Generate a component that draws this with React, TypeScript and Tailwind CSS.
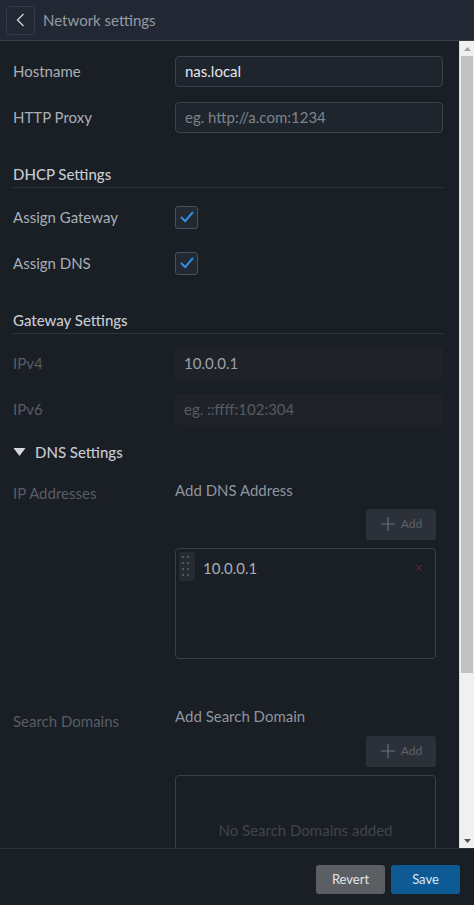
import React from "react";

const font = { fontFamily: "Lato, 'Open Sans', sans-serif" };

function Row({ label, children, dim }: { label: string; children: React.ReactNode; dim?: boolean }) {
  return (
    <div className="flex items-center h-[30px]">
      <div className={`w-[162px] text-[15px] ${dim ? "text-[#575d66]" : "text-[#a9afb7]"}`}>{label}</div>
      <div className="flex-1">{children}</div>
    </div>
  );
}

function Input({ value, placeholder }: { value?: string; placeholder?: string }) {
  return (
    <div className="h-[31px] rounded-[4px] border border-[#3b424c] bg-[#1f252d] px-[9px] flex items-center text-[15px]">
      {value ? <span className="text-[#e4e7eb]">{value}</span> : <span className="text-[#7d848d]">{placeholder}</span>}
    </div>
  );
}

function Disabled({ value, placeholder }: { value?: string; placeholder?: string }) {
  return (
    <div className="h-[31px] rounded-[3px] bg-[#1f2329] px-[9px] flex items-center text-[15px]">
      {value ? <span className="text-[#9ba1a9]">{value}</span> : <span className="text-[#555b63]">{placeholder}</span>}
    </div>
  );
}

function Check() {
  return (
    <div className="w-[23px] h-[23px] rounded-[3px] border border-[#4a515c] bg-[#232933] flex items-center justify-center">
      <svg width="16" height="16" viewBox="0 0 16 16">
        <path d="M2.5 8.5 L6.2 12.2 L13.5 3.5" fill="none" stroke="#2f8fe3" strokeWidth="2" strokeLinecap="round" strokeLinejoin="round" />
      </svg>
    </div>
  );
}

function Heading({ children }: { children: React.ReactNode }) {
  return (
    <div className="border-b border-[#30363f] pb-[3px] text-[15px] text-[#c6cbd1] font-medium leading-[19px]">{children}</div>
  );
}

function AddButton() {
  return (
    <div className="flex justify-end">
      <div className="w-[70px] h-[31px] rounded-[3px] bg-[#2c3139] flex items-center justify-center gap-[5px] text-[12px] text-[#5c626a]">
        <svg width="16" height="16" viewBox="0 0 16 16">
          <path d="M8 1 V15 M1 8 H15" stroke="#6a7078" strokeWidth="1.2" />
        </svg>
        <span>Add</span>
      </div>
    </div>
  );
}

export default function App() {
  return (
    <div style={font} className="w-[474px] h-[905px] flex flex-col bg-[#1a1e25] overflow-hidden">
      {/* header */}
      <div className="h-[41px] shrink-0 bg-[#222833] border-b border-[#3a414b] flex items-center pl-[6px]">
        <div className="w-[29px] h-[29px] rounded-[4px] border border-[#343b46] flex items-center justify-center">
          <svg width="14" height="16" viewBox="0 0 14 16">
            <path d="M9.5 2 L3.5 8 L9.5 14" fill="none" stroke="#c9ced4" strokeWidth="1.4" />
          </svg>
        </div>
        <span className="ml-[8px] text-[15px] text-[#939ba5]">Network settings</span>
      </div>

      {/* body */}
      <div className="flex-1 flex min-h-0">
        <div className="flex-1 overflow-hidden pl-[13px] pr-[16px]">
          <div className="pt-[15px] flex flex-col gap-[16px]">
            <Row label="Hostname"><Input value="nas.local" /></Row>
            <Row label="HTTP Proxy"><Input placeholder="eg. http://a.com:1234" /></Row>
          </div>

          <div className="mt-[33px]"><Heading>DHCP Settings</Heading></div>
          <div className="mt-[14px] flex flex-col gap-[16px]">
            <Row label="Assign Gateway"><Check /></Row>
            <Row label="Assign DNS"><Check /></Row>
          </div>

          <div className="mt-[33px]"><Heading>Gateway Settings</Heading></div>
          <div className="mt-[14px] flex flex-col gap-[16px]">
            <Row label="IPv4" dim><Disabled value="10.0.0.1" /></Row>
            <Row label="IPv6" dim><Disabled placeholder="eg. ::ffff:102:304" /></Row>
          </div>

          <div className="mt-[17px] flex items-center gap-[9px] text-[15px] text-[#c6cbd1] font-medium">
            <svg width="13" height="10" viewBox="0 0 13 10">
              <path d="M0.5 1 H12.5 L6.5 9 Z" fill="#d4d8dd" />
            </svg>
            <span>DNS Settings</span>
          </div>

          <div className="mt-[17px] flex">
            <div className="w-[162px] text-[15px] text-[#575d66] pt-[1px]">IP Addresses</div>
            <div className="flex-1 pr-[7px]">
              <div className="text-[15px] text-[#8f959d] leading-[18px]">Add DNS Address</div>
              <div className="mt-[10px]"><AddButton /></div>
              <div className="mt-[8px] h-[111px] rounded-[4px] border border-[#3a3f47] p-[3px]">
                <div className="flex items-start">
                  <div className="w-[16px] h-[29px] bg-[#262b32] rounded-[2px] grid grid-cols-2 content-center gap-y-[4px] px-[3px]">
                    {Array.from({ length: 8 }).map((_, i) => (
                      <div key={i} className="w-[2px] h-[2px] bg-[#50565e]" />
                    ))}
                  </div>
                  <span className="ml-[8px] mt-[5px] text-[15px] text-[#a9afb7] flex-1">10.0.0.1</span>
                  <span className="mt-[4px] mr-[9px] text-[15px] text-[#4f2a32]">×</span>
                </div>
              </div>

              <div className="h-[48px]" />
            </div>
          </div>

          <div className="flex">
            <div className="w-[162px] text-[15px] text-[#575d66] pt-[3px]">Search Domains</div>
            <div className="flex-1 pr-[7px]">
              <div className="text-[15px] text-[#8f959d] leading-[18px]">Add Search Domain</div>
              <div className="mt-[11px]"><AddButton /></div>
              <div className="mt-[8px] h-[111px] rounded-[4px] border border-[#3a3f47] flex items-center justify-center">
                <span className="text-[15px] text-[#3f454d]">No Search Domains added</span>
              </div>
            </div>
          </div>
        </div>

        {/* scrollbar */}
        <div className="w-[15px] shrink-0 bg-[#f0f0f0] flex flex-col border-l border-[#dcdcdc]">
          <div className="h-[15px] flex items-center justify-center">
            <svg width="7" height="4" viewBox="0 0 7 4"><path d="M0 4 L3.5 0 L7 4 Z" fill="#a3a3a3" /></svg>
          </div>
          <div className="h-[617px] mx-[1px] bg-[#c1c1c1]" />
          <div className="flex-1" />
          <div className="h-[15px] flex items-center justify-center">
            <svg width="7" height="4" viewBox="0 0 7 4"><path d="M0 0 L7 0 L3.5 4 Z" fill="#505050" /></svg>
          </div>
        </div>
      </div>

      {/* footer */}
      <div className="h-[57px] shrink-0 border-t border-[#2c323b] bg-[#1a1e25] flex items-start justify-end gap-[6px] pr-[14px] pt-[16px]">
        <div className="w-[69px] h-[29px] rounded-[3px] bg-[#5b5e63] flex items-center justify-center text-[13px] text-[#e3e5e8]">Revert</div>
        <div className="w-[69px] h-[29px] rounded-[3px] bg-[#0e5a95] flex items-center justify-center text-[13px] text-[#dfe9f3]">Save</div>
      </div>
    </div>
  );
}
